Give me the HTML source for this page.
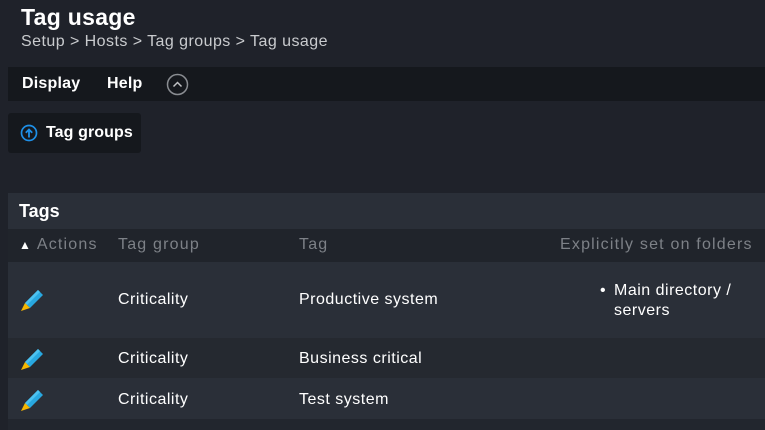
<!DOCTYPE html>
<html><head><style>
body{margin:0;width:765px;height:430px;overflow:hidden;background:#1f222a;font-family:"Liberation Sans",sans-serif;color:#fff;position:relative}
.a{position:absolute;white-space:nowrap}
.row{position:absolute;left:8px;right:0}
.t{font-size:16px;letter-spacing:0.5px}
.h{font-size:16px;color:#7d8187;letter-spacing:1.2px}
</style></head><body>
<div class="a" style="left:21px;top:4px;font-size:23px;font-weight:bold;letter-spacing:0.3px">Tag usage</div>
<div class="a" style="left:21px;top:33px;font-size:16px;color:#c9cbce;letter-spacing:0.45px">Setup &gt; Hosts &gt; Tag groups &gt; Tag usage</div>
<div class="row" style="top:67px;height:34px;background:#15181d"></div>
<div class="a" style="left:22px;top:75px;font-size:16px;font-weight:bold;letter-spacing:0.2px">Display</div>
<div class="a" style="left:107px;top:75px;font-size:16px;font-weight:bold;letter-spacing:0.2px">Help</div>
<svg class="a" style="left:166px;top:73px" width="23" height="23"><circle cx="11.5" cy="11.5" r="10" fill="none" stroke="#8a8d92" stroke-width="1.5"/><path d="M7.5 13.5 L11.5 9.5 L15.5 13.5" fill="none" stroke="#c0c2c5" stroke-width="1.5"/></svg>
<div class="a" style="left:8px;top:113px;width:133px;height:40px;background:#15181d;border-radius:3px"></div>
<svg class="a" style="left:20px;top:124px" width="18" height="18"><circle cx="9" cy="9" r="7.5" fill="none" stroke="#1e90e8" stroke-width="1.7"/><path d="M9 13.5V6M5.8 8.8L9 5.5L12.2 8.8" fill="none" stroke="#1e90e8" stroke-width="1.8"/></svg>
<div class="a" style="left:46px;top:124px;font-size:16px;font-weight:bold;letter-spacing:0.1px">Tag groups</div>
<div class="row" style="top:193px;height:237px;background:#22262e"></div>
<div class="row" style="top:193px;height:36px;background:#2a2f38"></div>
<div class="a" style="left:19px;top:201px;font-size:18px;font-weight:bold">Tags</div>
<div class="row" style="top:229px;height:33px;background:#20242b"></div>
<div class="a h" style="left:19px;top:236px"><span style="color:#fff;font-size:12px">▲</span> Actions</div>
<div class="a h" style="left:118px;top:236px">Tag group</div>
<div class="a h" style="left:299px;top:236px">Tag</div>
<div class="a h" style="left:560px;top:236px">Explicitly set on folders</div>
<div class="row" style="top:262px;height:76px;background:#2a2f38"></div>
<div class="row" style="top:338px;height:40px;background:#252930"></div>
<div class="row" style="top:378px;height:41px;background:#2a2f38"></div>
<svg width="0" height="0" style="position:absolute"><defs><g id="p"><path d="M6 15 L19 2 L24 7 L11 20 Z" fill="#28a8e0"/><path d="M6 15 L19 2 L21 4 L8 17Z" fill="#4cc2f0"/><path d="M6 15 L11 20 L2 23 Z" fill="#f5b700"/></g></defs></svg>
<svg class="a" style="left:19px;top:288px" width="26" height="25"><use href="#p"/></svg>
<svg class="a" style="left:19px;top:347px" width="26" height="25"><use href="#p"/></svg>
<svg class="a" style="left:19px;top:388px" width="26" height="25"><use href="#p"/></svg>
<div class="a t" style="left:118px;top:291px">Criticality</div>
<div class="a t" style="left:299px;top:291px">Productive system</div>
<div class="a t" style="left:600px;top:281px;line-height:20px">• <span style="position:absolute;left:14px">Main directory /<br>servers</span></div>
<div class="a t" style="left:118px;top:350px">Criticality</div>
<div class="a t" style="left:299px;top:350px">Business critical</div>
<div class="a t" style="left:118px;top:391px">Criticality</div>
<div class="a t" style="left:299px;top:391px">Test system</div>
</body></html>
